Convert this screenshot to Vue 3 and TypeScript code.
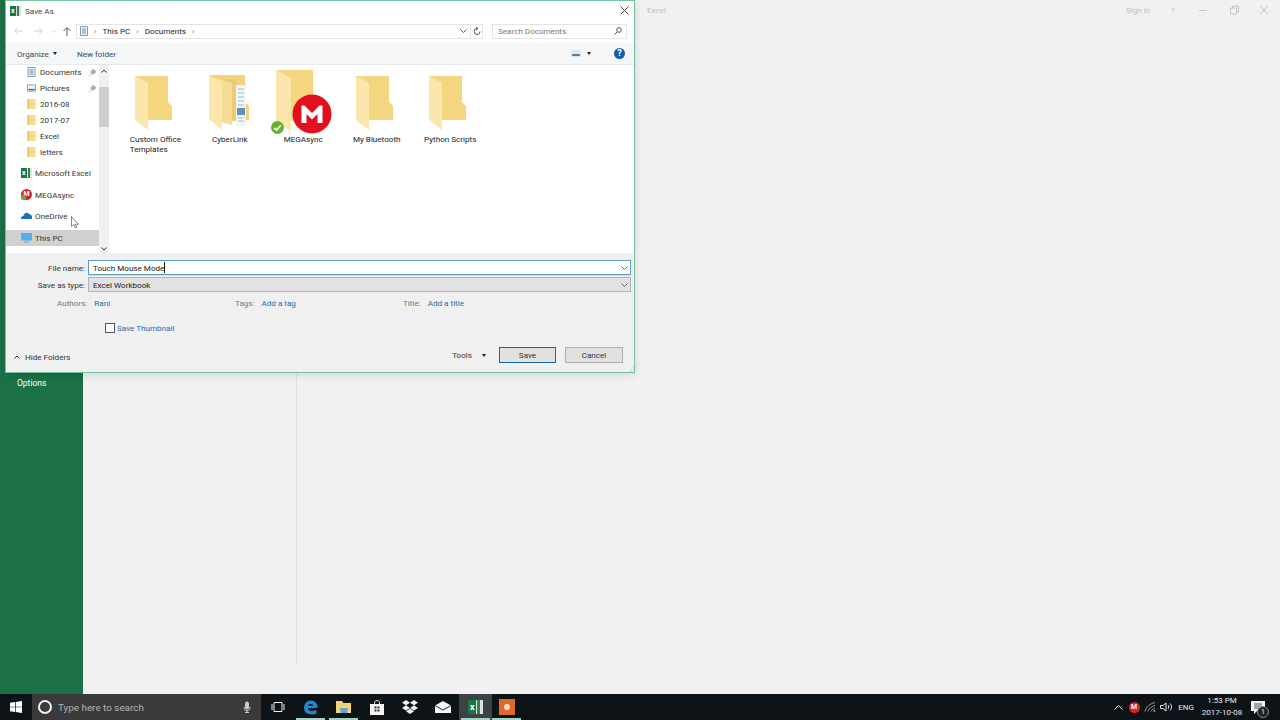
<script setup lang="ts">
interface NavItem {
  label: string
  kind: string
  pinned?: boolean
}

const pinnedNav: NavItem[] = [
  { label: 'Documents', kind: 'doc', pinned: true },
  { label: 'Pictures', kind: 'pic', pinned: true },
  { label: '2016-08', kind: 'folder' },
  { label: '2017-07', kind: 'folder' },
  { label: 'Excel', kind: 'folder' },
  { label: 'letters', kind: 'folder' }
]

const tiles = [
  { name: 'Custom Office Templates', kind: 'plain' },
  { name: 'CyberLink', kind: 'cyber' },
  { name: 'MEGAsync', kind: 'mega' },
  { name: 'My Bluetooth', kind: 'plain' },
  { name: 'Python Scripts', kind: 'plain' }
]
</script>

<template>
  <div class="screen">
    <div class="backstage">
      <aside class="rail">
        <span class="rail-option">Options</span>
      </aside>
      <main class="stage">
        <header class="app-bar">
          <span class="app-title">Excel</span>
          <span class="sign-in">Sign in</span>
          <span class="app-help">?</span>
          <svg class="app-btn" width="10" height="10" viewBox="0 0 10 10"><path d="M1 5.500h8" stroke="#c4c4c4" fill="none" /></svg>
          <svg class="app-btn" width="10" height="10" viewBox="0 0 10 10"><path d="M1.500 3h6v6h-6zM3.500 3V1h6v6h-2" stroke="#c4c4c4" fill="none" /></svg>
          <svg class="app-btn" width="10" height="10" viewBox="0 0 10 10"><path d="M1 1l8 8M9 1l-8 8" stroke="#c4c4c4" fill="none" /></svg>
        </header>
        <div class="stage-body">
          <div class="stage-col"></div>
        </div>
      </main>
    </div>

    <footer class="taskbar">
      <div class="start">
        <svg width="12" height="12" viewBox="0 0 12 12"><path d="M0 1.800l5-.7v4.600H0zM5.700 1l6.300-1v5.700H5.700zM0 6.300h5v4.600l-5-.7zM5.700 6.300H12V12l-6.300-1z" fill="#fff" /></svg>
      </div>
      <div class="search">
        <span class="cortana"></span>
        <span class="search-text">Type here to search</span>
        <svg class="mic" width="8" height="12" viewBox="0 0 8 12"><rect x="2" y="0.500" width="4" height="8" rx="2" fill="#c9c9c9" /><path d="M1 6c0 5 6 5 6 0M4 9.500V12M2 11.500h4" stroke="#c9c9c9" fill="none" /></svg>
      </div>
      <div class="slot">
        <svg width="14" height="10" viewBox="0 0 14 10"><path d="M3 .5h8v9H3zM1 2v6M13 2v6" stroke="#eee" fill="none" /></svg>
      </div>
      <div class="slot running">
        <svg width="15" height="15" viewBox="0 0 15 15"><path d="M1 8C1.200 3 4 .5 8 .5c4 0 6.500 2.800 6.500 7.500H5c.2 3.500 5 4 8.500 1.800v3.700C9 15.500 1 14.500 1 8zm4-2.200h5.300C10.200 3.300 5.500 3.200 5 5.800z" fill="#1a8ad4" /></svg>
      </div>
      <div class="slot running">
        <svg width="16" height="14" viewBox="0 0 16 14"><path d="M0 1h6l1.500 2H15v10H0z" fill="#f3d27a" /><path d="M4 8h8l-1 5H5z" fill="#5aa9cf" /></svg>
      </div>
      <div class="slot">
        <svg width="14" height="15" viewBox="0 0 14 15"><path d="M0 4h14v11H0z" fill="#f4f4f4" /><path d="M4.500 4V2.500C4.500 0 9.500 0 9.500 2.500V4" stroke="#f4f4f4" fill="none" /><path d="M4.500 6.500h2v2h-2zM7.500 6.500h2v2h-2zM4.500 9.500h2v2h-2zM7.500 9.500h2v2h-2z" fill="#333" /></svg>
      </div>
      <div class="slot">
        <svg width="16" height="14" viewBox="0 0 16 14"><path d="M4 0L0 2.700l4 2.600 4-2.600zM12 0L8 2.700l4 2.600 4-2.600zM0 8l4-2.700L8 8l-4 2.600zM16 8l-4-2.700L8 8l4 2.600zM4 11.300L8 8.800l4 2.500L8 14z" fill="#f2f2f2" /></svg>
      </div>
      <div class="slot">
        <svg width="16" height="12" viewBox="0 0 16 12"><path d="M0 4.500L8 0l8 4.500V12H0z" fill="#f6f6f6" /><path d="M0 4.500L8 9l8-4.500" stroke="#222" fill="none" /></svg>
      </div>
      <div class="slot running active">
        <span class="xl-tile">x</span>
      </div>
      <div class="slot running last">
        <span class="orange-tile"><i></i></span>
      </div>

      <div class="tray">
        <div class="tray-slot">
          <svg width="9" height="6" viewBox="0 0 9 6"><path d="M.5 5.500l4-4 4 4" stroke="#eee" fill="none" /></svg>
        </div>
        <div class="tray-slot"><span class="tray-mega">M</span></div>
        <div class="tray-slot">
          <svg width="12" height="10" viewBox="0 0 12 10"><path d="M1 9.500C2 5 6 1.500 11 .5M4 9.500c.7-2.500 3-5 7-6M7 9.500c.5-1.300 2-3 4-3.300M10 8.500h1v1h-1z" stroke="#9a9a9a" fill="none" /></svg>
        </div>
        <div class="tray-slot">
          <svg width="13" height="10" viewBox="0 0 13 10"><path d="M.5 3.500H3L6 1v8L3 6.500H.5zM8 3c1 1 1 3 0 4M10 1.500c2 2 2 5 0 7" stroke="#e4e4e4" fill="none" /></svg>
        </div>
        <span class="tray-lang">ENG</span>
        <div class="clock">
          <span>1:53 PM</span>
          <span>2017-10-08</span>
        </div>
        <div class="notify">
          <svg width="14" height="13" viewBox="0 0 14 13"><path d="M0 0h14v10H6l-3 3v-3H0z" fill="#f2f2f2" /><path d="M3 3h8M3 5h8M3 7h5" stroke="#555" /></svg>
          <span class="notify-count">1</span>
        </div>
      </div>
    </footer>

    <section class="dialog">
      <div class="dlg-title">
        <span class="xl-tile small">x</span>
        <span class="dlg-name">Save As</span>
        <svg class="dlg-close" width="9" height="9" viewBox="0 0 9 9"><path d="M.5.500l8 8M8.500.500l-8 8" stroke="#444" fill="none" /></svg>
      </div>

      <div class="addr-row">
        <svg width="9" height="8" viewBox="0 0 9 8"><path d="M4 .5L.8 4l3.200 3.500M1 4h8" stroke="#d0d0d0" fill="none" /></svg>
        <svg class="fwd" width="9" height="8" viewBox="0 0 9 8"><path d="M5 .5L8.200 4 5 7.500M8 4H0" stroke="#d0d0d0" fill="none" /></svg>
        <svg class="down" width="5" height="3" viewBox="0 0 5 3"><path d="M.5.500l2 2 2-2" stroke="#d0d0d0" fill="none" /></svg>
        <svg class="up" width="8" height="9" viewBox="0 0 8 9"><path d="M.5 4L4 .5 7.500 4M4 1v8" stroke="#555" fill="none" /></svg>
        <div class="addr-box">
          <svg class="addr-doc" width="8" height="10" viewBox="0 0 8 10"><path d="M.5.500h7v9h-7z" fill="#eef3f8" stroke="#8a9aa8" /><path d="M2 3h4M2 5h4M2 7h4" stroke="#5d8fb5" /></svg>
          <span class="crumb-sep">›</span>
          <span class="crumb">This PC</span>
          <span class="crumb-sep">›</span>
          <span class="crumb">Documents</span>
          <span class="crumb-sep">›</span>
          <svg class="addr-drop" width="7" height="4" viewBox="0 0 7 4"><path d="M.5.500l3 3 3-3" stroke="#555" fill="none" /></svg>
          <span class="addr-split"></span>
          <svg class="addr-refresh" width="8" height="9" viewBox="0 0 8 9"><path d="M4 1.500a3 3 0 1 0 3 3M3 0l2 1.500L3 3" stroke="#555" fill="none" /></svg>
        </div>
        <div class="search-box">
          <span>Search Documents</span>
          <svg width="8" height="8" viewBox="0 0 8 8"><circle cx="5" cy="3" r="2.300" stroke="#555" fill="none" /><path d="M3.300 4.700L.5 7.500" stroke="#555" /></svg>
        </div>
      </div>

      <div class="tool-row">
        <span class="tool">Organize</span>
        <span class="caret"></span>
        <span class="tool new-folder">New folder</span>
        <svg class="view-icon" width="10" height="7" viewBox="0 0 10 7"><path d="M0 0h10v7H0z" fill="#dfe8f0" /><path d="M1 4h8v2H1z" fill="#5a7fa0" /></svg>
        <span class="caret view-caret"></span>
        <span class="help">?</span>
      </div>

      <div class="browser">
        <nav class="nav">
          <ul class="nav-pinned">
            <li v-for="item in pinnedNav" :key="item.label" class="nav-row">
              <svg v-if="item.kind === 'doc'" class="nav-icon" width="8" height="10" viewBox="0 0 8 10"><path d="M.5.500h7v9h-7z" fill="#eef3f8" stroke="#8a9aa8" /><path d="M2 3h4M2 5h4M2 7h4" stroke="#5d8fb5" /></svg>
              <svg v-else-if="item.kind === 'pic'" class="nav-icon" width="10" height="8" viewBox="0 0 10 8"><path d="M.5.500h9v7h-9z" fill="#eef3f8" stroke="#8a9aa8" /><path d="M1.500 5h7v1.500h-7z" fill="#3d6f96" /></svg>
              <svg v-else class="nav-icon" width="8" height="10" viewBox="0 0 8 10"><path d="M0 0h8v10H0z" fill="#f7dc8b" /><path d="M0 0h1.500v10H0z" fill="#e5c263" /></svg>
              <span class="nav-label">{{ item.label }}</span>
              <svg v-if="item.pinned" class="pin" width="7" height="7" viewBox="0 0 7 7"><path d="M4 0l3 3-1.300.5L4 5.500 1.500 3 3.500 1.300zM2.500 4.500L0 7" stroke="#999" fill="#aaa" stroke-width=".6" /></svg>
            </li>
          </ul>
          <ul class="nav-roots">
            <li class="root-row">
              <span class="xl-tile small">x</span>
              <span class="nav-label">Microsoft Excel</span>
            </li>
            <li class="root-row">
              <span class="mega-dot">M</span>
              <span class="nav-label">MEGAsync</span>
            </li>
            <li class="root-row">
              <svg width="11" height="7" viewBox="0 0 11 7"><path d="M0 7c-.3-1.800.8-3 2.300-3C3 1.500 6-.8 8 2c2-.2 3.500 2.500 3 5z" fill="#1a6fc0" /></svg>
              <span class="nav-label">OneDrive</span>
            </li>
            <li class="root-row selected">
              <svg width="11" height="10" viewBox="0 0 11 10"><path d="M0 0h11v7.500H0z" fill="#4fb1ec" /><path d="M3 8.500h5v1H3z" fill="#8a9aa8" /></svg>
              <span class="nav-label">This PC</span>
            </li>
          </ul>
        </nav>

        <div class="nav-scroll">
          <svg width="6" height="4" viewBox="0 0 6 4"><path d="M.5 3.500L3 1l2.500 2.500" stroke="#333" fill="none" /></svg>
          <span class="thumb"></span>
          <svg class="scroll-down" width="6" height="4" viewBox="0 0 6 4"><path d="M.5.500L3 3 5.500.500" stroke="#333" fill="none" /></svg>
        </div>

        <div class="files">
          <div v-for="tile in tiles" :key="tile.name" class="tile">
            <div class="tile-art" :class="tile.kind">
              <svg v-if="tile.kind === 'plain'" width="38" height="54" viewBox="0 0 38 54">
                <path d="M0 0h33v26l4 4v14H13z" fill="#f5d680" />
                <path d="M0 0l13 7v47L0 44z" fill="#fbe7ab" />
              </svg>
              <svg v-else-if="tile.kind === 'cyber'" width="40" height="55" viewBox="0 0 40 55">
                <path d="M0 0h36v8l1 2v18l3 3v14H13z" fill="#f3d27a" />
                <path d="M14 4h14v42H14z" fill="#eccb78" />
                <path d="M27 10h10v41H27z" fill="#f3f5f7" />
                <path d="M29 14h6M29 18h6M29 22h6M29 26h6M29 30h6M29 43h6M29 46h6" stroke="#a7bccb" />
                <path d="M28 33h8v7h-8z" fill="#5b93bd" />
                <path d="M6 3l17 5v42l-17-5z" fill="#f6dc97" />
                <path d="M0 0l13 7v48L0 44z" fill="#fbe7ab" />
              </svg>
              <svg v-else class="mega-folder" width="42" height="62" viewBox="0 0 42 62">
                <path d="M0 0h37v32l5 2v17H15z" fill="#f5d680" />
                <path d="M0 0l15 8v54L0 50z" fill="#fbe7ab" />
              </svg>
              <template v-if="tile.kind === 'mega'">
                <svg class="mega-badge" width="40" height="40" viewBox="0 0 40 40">
                  <circle cx="20" cy="20" r="19.500" fill="#e2101e" />
                  <path d="M9.500 29V11.500h3L20 19l7.500-7.500h3V29h-5V20l-5.500 5.500L14.500 20v9z" fill="#fff" />
                </svg>
                <svg class="sync-badge" width="13" height="13" viewBox="0 0 13 13">
                  <circle cx="6.500" cy="6.500" r="6.500" fill="#6aaf32" />
                  <path d="M3.200 6.800l2.300 2.200 4.200-4.500" stroke="#fff" stroke-width="1.600" fill="none" />
                </svg>
              </template>
            </div>
            <span class="tile-name">{{ tile.name }}</span>
          </div>
        </div>
      </div>

      <div class="bottom">
        <div class="field-row">
          <label class="field-label">File name:</label>
          <div class="field-input">
            <span class="typed">Touch Mouse Mode</span>
            <span class="text-cursor"></span>
            <svg class="chev" width="7" height="4" viewBox="0 0 7 4"><path d="M.5.500l3 3 3-3" stroke="#666" fill="none" /></svg>
          </div>
        </div>
        <div class="field-row type-row">
          <label class="field-label">Save as type:</label>
          <div class="field-select">
            <span class="typed">Excel Workbook</span>
            <svg class="chev" width="7" height="4" viewBox="0 0 7 4"><path d="M.5.500l3 3 3-3" stroke="#666" fill="none" /></svg>
          </div>
        </div>
        <div class="meta-row">
          <div class="meta-group first">
            <span class="meta-key">Authors:</span>
            <span class="meta-val">Rani</span>
          </div>
          <div class="meta-group second">
            <span class="meta-key">Tags:</span>
            <span class="meta-val">Add a tag</span>
          </div>
          <div class="meta-group">
            <span class="meta-key">Title:</span>
            <span class="meta-val">Add a title</span>
          </div>
        </div>
        <div class="thumb-row">
          <span class="check"></span>
          <span class="meta-val">Save Thumbnail</span>
        </div>
        <div class="action-row">
          <svg class="hide-chev" width="6" height="4" viewBox="0 0 6 4"><path d="M.5 3.500L3 1l2.500 2.500" stroke="#333" fill="none" /></svg>
          <span class="hide-folders">Hide Folders</span>
          <span class="tools">Tools</span>
          <span class="caret tools-caret"></span>
          <button class="btn primary">Save</button>
          <button class="btn cancel">Cancel</button>
        </div>
        <svg class="grip" width="5" height="5" viewBox="0 0 5 5"><path d="M4 0h1v1H4zM2 2h1v1H2zM4 2h1v1H4zM0 4h1v1H0zM2 4h1v1H2zM4 4h1v1H4z" fill="#c4c4c4" /></svg>
      </div>
    </section>

    <svg class="pointer" width="8" height="13" viewBox="0 0 8 13"><path d="M.5.500v10l2.300-2 1.500 3.500 1.500-.7L4.300 8.300h3z" fill="#fff" stroke="#555" stroke-width=".7" /></svg>
  </div>
</template>

<style>
html,
body {
  margin: 0;
  background: #f1f1f1;
}
</style>

<style scoped>
.screen {
  position: relative;
  display: flex;
  flex-direction: column;
  width: 1280px;
  height: 720px;
  overflow: hidden;
  font-family: Roboto, "Liberation Sans", sans-serif;
  font-size: 8.100px;
  color: #333;
  background: #f1f1f1;
  white-space: nowrap;
}

ul {
  margin: 0;
  padding: 0;
  list-style: none;
}

svg {
  display: block;
  flex-shrink: 0;
}

/* excel behind the dialog */
.backstage {
  display: flex;
  flex: 1;
  min-height: 0;
}

.rail {
  flex: none;
  width: 83px;
  padding: 378px 0 0 17px;
  box-sizing: border-box;
  background: #1b7145;
  color: #fff;
}

.rail-option {
  display: block;
  font-size: 8.500px;
  line-height: 11px;
}

.stage {
  flex: 1;
  min-width: 0;
  display: flex;
  flex-direction: column;
}

.app-bar {
  display: flex;
  align-items: center;
  height: 20px;
  padding-left: 564px;
  color: #c0c0c0;
}

.app-title {
  width: 18px;
}

.sign-in {
  width: 24px;
  margin-left: 461px;
}

.app-help {
  margin-left: 21px;
}

.app-btn:nth-of-type(1) {
  margin-left: 23px;
}

.app-btn:nth-of-type(2) {
  margin-left: 21px;
}

.app-btn:nth-of-type(3) {
  margin-left: 20px;
}

.stage-body {
  flex: 1;
  padding: 1px 0 29px 213px;
  display: flex;
}

.stage-col {
  width: 1px;
  background: #e2e2e2;
}

/* taskbar */
.taskbar {
  display: flex;
  flex: none;
  align-items: stretch;
  height: 26px;
  background: #0e1317;
  color: #e8e8e8;
}

.start {
  display: flex;
  align-items: center;
  justify-content: center;
  width: 32px;
}

.search {
  display: flex;
  align-items: center;
  width: 229px;
  padding: 0 10px 0 6px;
  box-sizing: border-box;
  background: #3a3a3a;
}

.cortana {
  width: 10px;
  height: 10px;
  border: 2px solid #f0f0f0;
  border-radius: 50%;
}

.search-text {
  flex: 1;
  margin-left: 6px;
  font-size: 9.900px;
  color: #b4b4b4;
}

.slot {
  display: flex;
  align-items: center;
  justify-content: center;
  width: 33px;
  box-sizing: border-box;
}

.slot.running {
  background-image: linear-gradient(#9fd4c4, #9fd4c4);
  background-position: center bottom;
  background-repeat: no-repeat;
  background-size: 29px 2px;
}

.slot.active {
  background-color: #3c4144;
}

.slot.last {
  width: 29px;
}

.xl-tile {
  display: flex;
  align-items: center;
  flex: none;
  width: 15px;
  height: 14px;
  padding-left: 2px;
  box-sizing: border-box;
  background: linear-gradient(90deg, #1c7545 0 55%, #d9e6df 55% 62%, #2d8057 62% 78%, #d9e6df 78%);
  color: #fff;
  font-size: 9px;
  font-weight: 700;
}

.xl-tile.small {
  width: 11px;
  height: 10px;
  padding-left: 1px;
  font-size: 7px;
}

.orange-tile {
  display: flex;
  align-items: center;
  justify-content: center;
  width: 16px;
  height: 16px;
  background: #dd6a28;
}

.orange-tile i {
  width: 6px;
  height: 6px;
  border-radius: 50%;
  background: #f8dcc4;
}

.tray {
  display: flex;
  align-items: center;
  margin-left: auto;
  padding-right: 10px;
}

.tray-slot {
  display: flex;
  align-items: center;
  justify-content: center;
  width: 16px;
}

.tray-mega {
  width: 11px;
  height: 11px;
  border-radius: 50%;
  background: #d9222e;
  color: #fff;
  font-size: 7px;
  font-weight: 700;
  line-height: 11px;
  text-align: center;
}

.tray-lang {
  width: 24px;
  font-size: 8px;
  text-align: center;
}

.clock {
  display: flex;
  flex-direction: column;
  align-items: center;
  width: 48px;
  font-size: 8px;
  line-height: 12px;
}

.notify {
  position: relative;
  display: flex;
  justify-content: center;
  width: 24px;
}

.notify-count {
  position: absolute;
  right: 1px;
  bottom: -4px;
  width: 10px;
  height: 10px;
  border: 1px solid #888;
  border-radius: 50%;
  background: #222;
  font-size: 7px;
  line-height: 10px;
  text-align: center;
}

/* the save as window floats over excel */
.dialog {
  position: absolute;
  top: 0;
  left: 5px;
  display: flex;
  flex-direction: column;
  width: 630px;
  height: 373px;
  box-sizing: border-box;
  border: 1px solid #71c49b;
  background: #fff;
  box-shadow: 0 2px 8px rgba(0, 0, 0, 0.12);
}

.dlg-title {
  display: flex;
  align-items: center;
  gap: 4px;
  height: 19px;
  padding: 0 5px 0 4px;
  color: #444;
}

.dlg-close {
  margin-left: auto;
}

.addr-row {
  display: flex;
  align-items: center;
  height: 22px;
  padding: 0 0 1px 7.500px;
}

.fwd {
  margin-left: 11px;
}

.down {
  margin-left: 8.500px;
}

.up {
  margin-left: 7px;
}

.addr-box {
  display: flex;
  align-items: center;
  width: 407px;
  height: 15px;
  margin-left: 5px;
  padding-left: 3px;
  box-sizing: border-box;
  border: 1px solid #e4e4e4;
}

.addr-doc {
  margin-right: 6px;
}

.crumb {
  margin: 0 6px;
  color: #222;
}

.crumb-sep {
  color: #666;
}

.addr-drop {
  margin-left: auto;
  margin-right: 3px;
}

.addr-split {
  width: 1px;
  height: 13px;
  background: #e4e4e4;
}

.addr-refresh {
  margin: 0 1px 0 2.500px;
}

.search-box {
  display: flex;
  align-items: center;
  justify-content: space-between;
  width: 135px;
  height: 15px;
  margin-left: 9px;
  padding: 0 4px 0 5px;
  box-sizing: border-box;
  border: 1px solid #e4e4e4;
  color: #777;
}

.tool-row {
  display: flex;
  align-items: center;
  height: 21px;
  padding-left: 11px;
  background: #f4f6f7;
  border-bottom: 1px solid #e8ebee;
  color: #3f4a55;
}

.caret {
  width: 0;
  height: 0;
  margin-left: 4px;
  border: 2.500px solid transparent;
  border-top: 3px solid #222;
  border-bottom: 0;
}

.new-folder {
  margin-left: 20px;
}

.view-icon {
  margin-left: auto;
}

.view-caret {
  margin-left: 6px;
}

.help {
  width: 11px;
  height: 11px;
  margin: 0 9px 0 23px;
  border-radius: 50%;
  background: #0d5fb5;
  color: #fff;
  font-size: 9px;
  font-weight: 700;
  line-height: 11px;
  text-align: center;
}

.browser {
  display: flex;
  height: 188px;
  overflow: hidden;
}

.nav {
  width: 93px;
}

.nav-pinned {
  margin-top: -1px;
  padding-left: 21px;
}

.nav-row {
  display: flex;
  align-items: center;
  height: 16px;
}

.nav-icon {
  width: 9px;
  margin-right: 4px;
}

.pin {
  margin-left: auto;
  margin-right: 3px;
}

.nav-roots {
  margin-top: 2.500px;
}

.root-row {
  display: flex;
  align-items: center;
  gap: 3px;
  height: 21.400px;
  padding-left: 15px;
}

.root-row.selected {
  height: 16px;
  margin-top: 3.500px;
  background: #d0d0d0;
}

.mega-dot {
  position: relative;
  width: 11px;
  height: 11px;
  border-radius: 50%;
  background: #d9222e;
  color: #fff;
  font-size: 7px;
  font-weight: 700;
  line-height: 11px;
  text-align: center;
}

.mega-dot::after {
  content: "";
  position: absolute;
  left: 0;
  bottom: 0;
  width: 5px;
  height: 5px;
  border-radius: 50%;
  background: #6aaf32;
}

.nav-scroll {
  display: flex;
  flex-direction: column;
  align-items: center;
  width: 10px;
  padding-top: 4px;
  box-sizing: border-box;
  background: #f0f0f0;
}

.thumb {
  width: 10px;
  height: 40px;
  margin-top: 14px;
  background: #cdcdcd;
}

.scroll-down {
  margin-top: auto;
  margin-bottom: 2px;
}

.files {
  display: flex;
  flex: 1;
  align-items: flex-start;
  padding: 12px 0 0 10.500px;
}

.tile {
  display: flex;
  flex-direction: column;
  align-items: center;
  width: 73.500px;
  line-height: 10px;
  color: #222;
}

.tile-art {
  position: relative;
  display: flex;
  align-items: flex-end;
  height: 53px;
  margin-bottom: 4px;
}

.tile-art.plain {
  margin-right: 4px;
}

.tile-art.cyber {
  margin-right: 1px;
}

.tile-art.mega {
  margin-right: 12px;
}

.mega-folder {
  margin-bottom: -2px;
}

.tile:first-child .tile-name {
  width: 53px;
}

.tile-name {
  white-space: normal;
}

.tile:not(:first-child) .tile-name {
  white-space: nowrap;
}

.mega-badge {
  position: absolute;
  right: -14px;
  bottom: -3.500px;
  width: 40px;
  height: 40px;
}

.sync-badge {
  position: absolute;
  left: -5px;
  bottom: -4px;
}

/* filename and metadata panel */
.bottom {
  position: relative;
  flex: 1;
  display: flex;
  flex-direction: column;
  padding-top: 7px;
  background: #f0f0f0;
}

.field-row {
  display: flex;
  align-items: center;
  height: 15px;
  margin-right: 3px;
}

.type-row {
  margin-top: 2px;
}

.field-label {
  width: 79px;
  margin-right: 3px;
  text-align: right;
}

.field-input,
.field-select {
  display: flex;
  align-items: center;
  flex: 1;
  height: 15px;
  padding: 0 2px 0 4px;
  box-sizing: border-box;
  color: #222;
}

.field-input {
  border: 1px solid #5b9ec3;
  background: #fff;
  box-shadow: 0 1px 0 #cfe4ee;
}

.field-select {
  border: 1px solid #b4b4b4;
  background: #e2e2e2;
}

.text-cursor {
  width: 1px;
  height: 11px;
  background: #111;
}

.chev {
  margin-left: auto;
}

.meta-row {
  display: flex;
  align-items: center;
  height: 12px;
  margin-top: 5px;
  padding-left: 51px;
}

.meta-group {
  display: flex;
  gap: 7px;
}

.meta-group.first {
  width: 178px;
}

.meta-group.second {
  width: 168px;
}

.meta-key {
  color: #777;
}

.meta-val {
  color: #1f6ab0;
}

.thumb-row {
  display: flex;
  align-items: center;
  gap: 2px;
  height: 12px;
  margin-top: 13px;
  padding-left: 99px;
}

.check {
  width: 8px;
  height: 8px;
  border: 1px solid #555;
  background: #fff;
}

.action-row {
  display: flex;
  align-items: center;
  height: 16px;
  margin-top: 13px;
  padding-left: 8px;
}

.hide-chev {
  margin-top: 3px;
}

.hide-folders {
  margin: 3px 0 0 5px;
}

.tools {
  margin-left: auto;
}

.tools-caret {
  margin-left: 10px;
  margin-right: 13px;
}

.btn {
  width: 57px;
  height: 16px;
  margin-right: 9px;
  padding: 0;
  border: 1px solid #adadad;
  background: #e1e1e1;
  color: #333;
  font: inherit;
}

.btn.primary {
  border-color: #0f68b4;
}

.btn.cancel {
  width: 58px;
  margin-right: 11px;
}

.grip {
  position: absolute;
  right: 0;
  bottom: 0;
}

.pointer {
  position: absolute;
  top: 216px;
  left: 71px;
}
</style>
